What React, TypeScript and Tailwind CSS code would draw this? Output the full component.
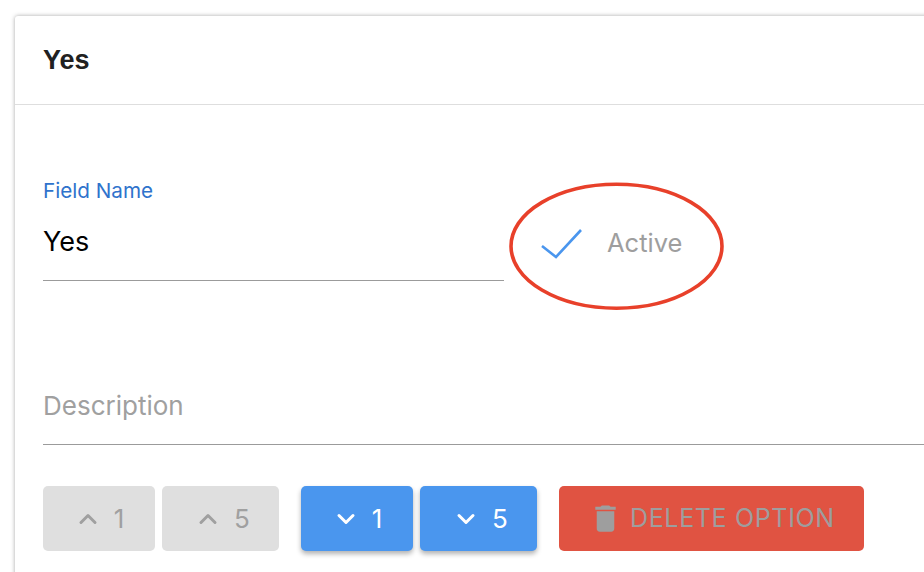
import { ChevronDown, ChevronUp } from "lucide-react";

const font = { fontFamily: '"Inter", "Liberation Sans", sans-serif' };

function TrashIcon() {
  return (
    <svg viewBox="0 0 24 24" className="h-[35px] w-[35px] shrink-0" fill="#9e9e9e">
      <path d="M6 19c0 1.1.9 2 2 2h8c1.1 0 2-.9 2-2V7H6v12zM19 4h-3.5l-1-1h-5l-1 1H5v2h14V4z" />
    </svg>
  );
}

function MoveButton({ up, step }: { up?: boolean; step: number }) {
  const Icon = up ? ChevronUp : ChevronDown;
  const tone = up
    ? "bg-[#dfdfdf] text-[#a0a0a0]"
    : "bg-[#4a96ee] text-white shadow-[0_3px_5px_rgba(0,0,0,0.3)]";
  return (
    <button
      type="button"
      className={`flex h-[65px] items-center justify-center gap-[12px] rounded-[5px] text-[26px] ${step === 1 ? "w-[112px]" : "w-[117px] pl-[3px]"} ${tone}`}
    >
      <Icon className="h-[28px] w-[28px]" strokeWidth={2.6} />
      {step}
    </button>
  );
}

export default function App() {
  return (
    <div className="h-[572px] w-[924px] overflow-hidden bg-white pl-[15px] pt-[16px]" style={font}>
      <section className="relative h-[640px] w-[1000px] rounded-[3px] bg-white shadow-[0_0_4px_rgba(0,0,0,0.35)]">
        <header className="flex h-[89px] items-center border-b border-[#dedede] pl-[28px]">
          <h2 className="text-[27px] font-bold text-[#212121]" style={{ fontFamily: '"Liberation Sans", sans-serif' }}>
            Yes
          </h2>
        </header>

        <div className="pl-[28px] pt-[74px]">
          <div className="flex items-start">
            <div className="w-[461px] border-b border-[#9b9b9b]">
              <label className="block text-[20.7px] leading-[24px] text-[#2f73cc]">Field Name</label>
              <p className="h-[77px] pt-[22px] text-[27px] leading-[34px] text-black">Yes</p>
            </div>
            <div className="ml-[36px] flex h-[102px] items-center pt-[27px] text-[25.5px] text-[#9e9e9e]">
              <svg width="44" height="34" viewBox="0 0 44 34" fill="none" stroke="#4a96ee" strokeWidth="2.6" className="shrink-0">
                <path d="M2 19 L16 30 L41 3" />
              </svg>
              <span className="ml-[23px]">Active</span>
            </div>
          </div>

          <div className="mt-[109px] h-[55px] w-[900px] border-b border-[#9b9b9b] text-[26px] leading-[32px] text-[#a0a0a0]">
            Description
          </div>

          <div className="mt-[41px] flex items-center">
            <div className="flex gap-[7px]">
              <MoveButton up step={1} />
              <MoveButton up step={5} />
            </div>
            <div className="ml-[22px] flex gap-[7px]">
              <MoveButton step={1} />
              <MoveButton step={5} />
            </div>
            <button
              type="button"
              className="ml-[22px] flex h-[65px] w-[305px] items-center rounded-[5px] bg-[#e05342] pl-[29px] text-[25px] tracking-[0.65px] text-[#9e9e9e]"
            >
              <TrashIcon />
              <span className="ml-[7px]">DELETE OPTION</span>
            </button>
          </div>
        </div>

        <svg className="absolute left-[492px] top-[163px]" width="218" height="132" viewBox="0 0 218 132" fill="none">
          <ellipse cx="109.5" cy="67.2" rx="105.5" ry="62" stroke="#e8402a" strokeWidth="3.6" />
        </svg>
      </section>
    </div>
  );
}
